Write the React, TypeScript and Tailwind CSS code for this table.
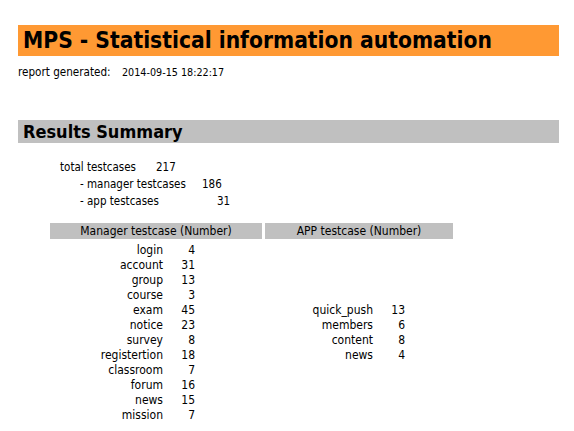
import React from "react";

const manager: [string, number][] = [
  ["login", 4],
  ["account", 31],
  ["group", 13],
  ["course", 3],
  ["exam", 45],
  ["notice", 23],
  ["survey", 8],
  ["registertion", 18],
  ["classroom", 7],
  ["forum", 16],
  ["news", 15],
  ["mission", 7],
];

const app: [string, number][] = [
  ["quick_push", 13],
  ["members", 6],
  ["content", 8],
  ["news", 4],
];

const font = { fontFamily: '"DejaVu Sans Condensed", "DejaVu Sans", sans-serif' };

function Rows({ data, labelW }: { data: [string, number][]; labelW: string }) {
  return (
    <div className="flex flex-col">
      {data.map(([k, v]) => (
        <div key={k} className="flex h-[15px] items-center leading-[15px]">
          <div className={`${labelW} text-right`}>{k}</div>
          <div className="w-[32px] text-right">{v}</div>
        </div>
      ))}
    </div>
  );
}

export default function App() {
  return (
    <div className="min-h-[431px] bg-white px-[18px] pt-[25px] text-black" style={font}>
      <div className="h-[31px] w-[541px] bg-[#ff9933] pl-[5px] text-[22.6px] font-bold leading-[31px]">
        MPS - Statistical information automation
      </div>
      <div className="mt-[10px] flex h-[14px] items-center">
        <span className="w-[104px] text-[11.6px]">report generated:</span>
        <span className="text-[10.7px]">2014-09-15 18:22:17</span>
      </div>
      <div className="mt-[40px] h-[23px] w-[541px] bg-[#c0c0c0] pl-[5px] text-[18px] font-bold leading-[23px]">
        Results Summary
      </div>
      <div className="mt-[16px] pl-[42px] text-[11.5px] leading-[17px]">
        <div className="flex">
          <div className="w-[96px]">total testcases</div>
          <div>217</div>
        </div>
        <div className="flex pl-[20px]">
          <div className="w-[122px]">- manager testcases</div>
          <div>186</div>
        </div>
        <div className="flex pl-[20px]">
          <div className="w-[137px]">- app testcases</div>
          <div>31</div>
        </div>
      </div>
      <div className="ml-[32px] mt-[13px] flex gap-[3px] text-[12px]">
        <div className="flex w-[212px] flex-col">
          <div className="h-[16px] bg-[#c0c0c0] text-center text-[12px] leading-[16px]">
            Manager testcase (Number)
          </div>
          <div className="pt-[4px]">
            <Rows data={manager} labelW="w-[113px]" />
          </div>
        </div>
        <div className="flex w-[188px] flex-col">
          <div className="h-[16px] bg-[#c0c0c0] text-center text-[12px] leading-[16px]">
            APP testcase (Number)
          </div>
          <div className="flex flex-1 items-center pt-[4px]">
            <Rows data={app} labelW="w-[108px]" />
          </div>
        </div>
      </div>
    </div>
  );
}
